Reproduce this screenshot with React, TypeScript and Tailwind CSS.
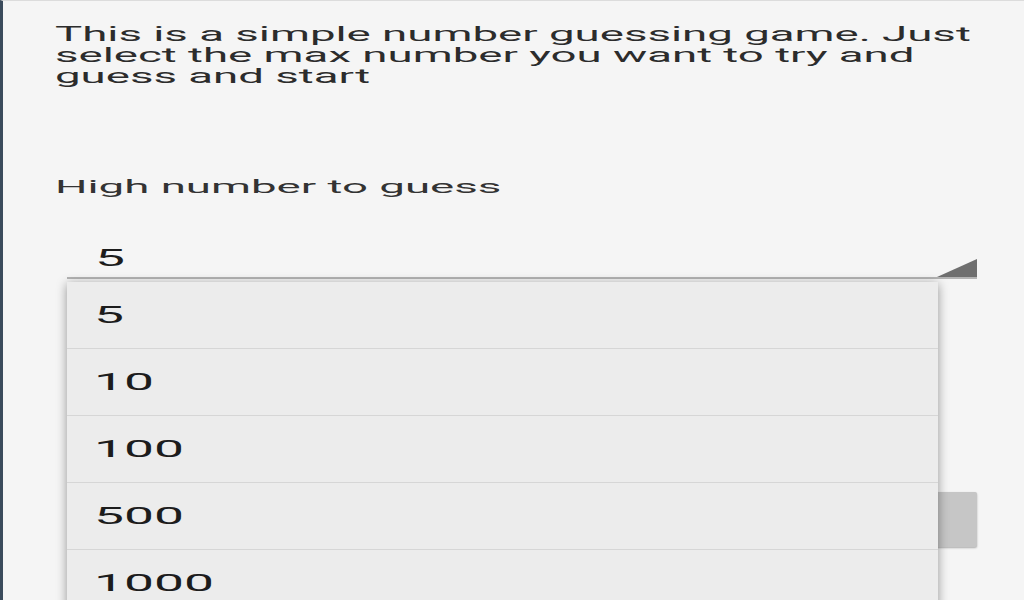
const options = ['5', '10', '100', '500', '1000'];

const intro = [
  'This is a simple number guessing game. Just',
  'select the max number you want to try and',
  'guess and start',
];

function Wide({ children, className = '' }: { children: React.ReactNode; className?: string }) {
  return (
    <span className={`inline-block origin-left whitespace-nowrap ${className}`}>
      {children}
    </span>
  );
}

export default function App() {
  return (
    <div
      className="relative h-[600px] w-[1024px] overflow-hidden bg-[#f5f5f5] border-l-[3px] border-[#3b4b5c] border-t border-t-[#dcdcdc]"
      style={{ fontFamily: 'Roboto, "Noto Sans", sans-serif' }}
    >
      <div className="pl-[52px] pr-[47px] pt-[23px]">
        <div className="text-[20px] leading-[21px] text-[#2c2c2c]">
          {intro.map((line) => (
            <div key={line}>
              <Wide className="scale-x-[2.28]">{line}</Wide>
            </div>
          ))}
        </div>

        <div className="mt-[89px] text-[19px] leading-[21px] text-[#333333]">
          <Wide className="scale-x-[2.4]">High number to guess</Wide>
        </div>

        {/* spinner */}
        <div className="relative mt-[37px] ml-[12px] flex h-[45px] items-center border-b-2 border-[#b4b4b4] pl-[28px] pt-[5px]">
          <Wide className="scale-x-[2.32] text-[23px] leading-none text-[#1c1c1c]">5</Wide>
          <svg className="absolute right-0 bottom-0" width="40" height="18" viewBox="0 0 40 18">
            <polygon points="40,0 40,18 0,18" fill="#6f6f6f" />
          </svg>
        </div>

        <button className="mt-[213px] ml-[20px] h-[55px] w-[902px] rounded-[2px] bg-[#c6c6c6] shadow-[0_1px_2px_rgba(0,0,0,0.3)]" />
      </div>

      {/* open dropdown list */}
      <ul className="absolute left-[64px] top-[281px] w-[871px] bg-[#ececec] shadow-[0_2px_10px_rgba(0,0,0,0.4)]">
        {options.map((opt, i) => (
          <li
            key={opt}
            className={`flex h-[67px] items-center pl-[27px] ${i < options.length - 1 ? 'border-b border-[#d6d6d6]' : ''}`}
          >
            <Wide className="scale-x-[2.32] text-[23px] leading-none text-[#1c1c1c]">{opt}</Wide>
          </li>
        ))}
      </ul>
    </div>
  );
}
